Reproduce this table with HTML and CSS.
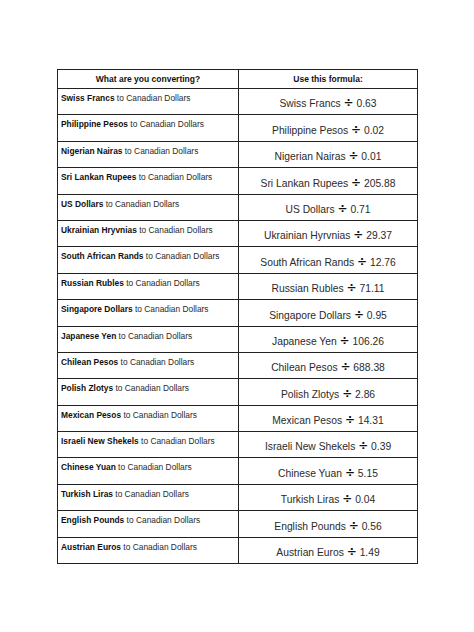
FILE: index.html
```html
<!DOCTYPE html>
<html>
<head>
<meta charset="utf-8">
<link rel="stylesheet" href="styles.css">
</head>
<body>
<div class="page">
<table class="conv">
<thead>
<tr class="hd"><th class="hl">What are you converting?</th><th class="hr">Use this formula:</th></tr>
</thead>
<tbody>
<tr><td class="l"><b>Swiss Francs</b> to Canadian Dollars</td><td class="r">Swiss Francs <span class="div">÷</span> 0.63</td></tr>
<tr><td class="l"><b>Philippine Pesos</b> to Canadian Dollars</td><td class="r">Philippine Pesos <span class="div">÷</span> 0.02</td></tr>
<tr><td class="l"><b>Nigerian Nairas</b> to Canadian Dollars</td><td class="r">Nigerian Nairas <span class="div">÷</span> 0.01</td></tr>
<tr><td class="l"><b>Sri Lankan Rupees</b> to Canadian Dollars</td><td class="r">Sri Lankan Rupees <span class="div">÷</span> 205.88</td></tr>
<tr><td class="l"><b>US Dollars</b> to Canadian Dollars</td><td class="r">US Dollars <span class="div">÷</span> 0.71</td></tr>
<tr><td class="l"><b>Ukrainian Hryvnias</b> to Canadian Dollars</td><td class="r">Ukrainian Hyrvnias <span class="div">÷</span> 29.37</td></tr>
<tr><td class="l"><b>South African Rands</b> to Canadian Dollars</td><td class="r">South African Rands <span class="div">÷</span> 12.76</td></tr>
<tr><td class="l"><b>Russian Rubles</b> to Canadian Dollars</td><td class="r">Russian Rubles <span class="div">÷</span> 71.11</td></tr>
<tr><td class="l"><b>Singapore Dollars</b> to Canadian Dollars</td><td class="r">Singapore Dollars <span class="div">÷</span> 0.95</td></tr>
<tr><td class="l"><b>Japanese Yen</b> to Canadian Dollars</td><td class="r">Japanese Yen <span class="div">÷</span> 106.26</td></tr>
<tr><td class="l"><b>Chilean Pesos</b> to Canadian Dollars</td><td class="r">Chilean Pesos <span class="div">÷</span> 688.38</td></tr>
<tr><td class="l"><b>Polish Zlotys</b> to Canadian Dollars</td><td class="r">Polish Zlotys <span class="div">÷</span> 2.86</td></tr>
<tr><td class="l"><b>Mexican Pesos</b> to Canadian Dollars</td><td class="r">Mexican Pesos <span class="div">÷</span> 14.31</td></tr>
<tr><td class="l"><b>Israeli New Shekels</b> to Canadian Dollars</td><td class="r">Israeli New Shekels <span class="div">÷</span> 0.39</td></tr>
<tr><td class="l"><b>Chinese Yuan</b> to Canadian Dollars</td><td class="r">Chinese Yuan <span class="div">÷</span> 5.15</td></tr>
<tr><td class="l"><b>Turkish Liras</b> to Canadian Dollars</td><td class="r">Turkish Liras <span class="div">÷</span> 0.04</td></tr>
<tr><td class="l"><b>English Pounds</b> to Canadian Dollars</td><td class="r">English Pounds <span class="div">÷</span> 0.56</td></tr>
<tr><td class="l"><b>Austrian Euros</b> to Canadian Dollars</td><td class="r">Austrian Euros <span class="div">÷</span> 1.49</td></tr>
</tbody>
</table>
</div>
</body>
</html>
```
FILE: styles.css
```css
html, body {
  margin: 0;
  padding: 0;
  background: #ffffff;
}
.page {
  width: 474px;
  height: 632px;
  padding: 69px 0 0 57px;
  box-sizing: border-box;
  font-family: "Liberation Sans", Arial, sans-serif;
  color: #111;
}
.conv {
  border-collapse: collapse;
  width: 361px;
  table-layout: fixed;
}
.conv th, .conv td {
  border: 1px solid #222;
  padding: 0;
}
.hl { width: 180px; }
.hd { height: 19px; }
.conv tbody tr { height: 26.4px; }
.conv th {
  font-size: 8.5px;
  font-weight: bold;
  text-align: center;
  vertical-align: middle;
  line-height: 10px;
}
.conv td.l {
  font-size: 8.4px;
  line-height: 10px;
  vertical-align: top;
  padding: 4px 0 0 3px;
  white-space: nowrap;
  color: #2a2a2a;
}
.l b { color: #111; }
.conv td.r {
  font-size: 10.3px;
  line-height: 12px;
  text-align: center;
  vertical-align: bottom;
  padding: 0 0 4px 0;
  color: #2a2a2a;
}
.div {
  font-family: "DejaVu Sans", sans-serif;
  font-weight: bold;
  font-size: 12px;
  line-height: 10px;
  color: #111;
}
```
